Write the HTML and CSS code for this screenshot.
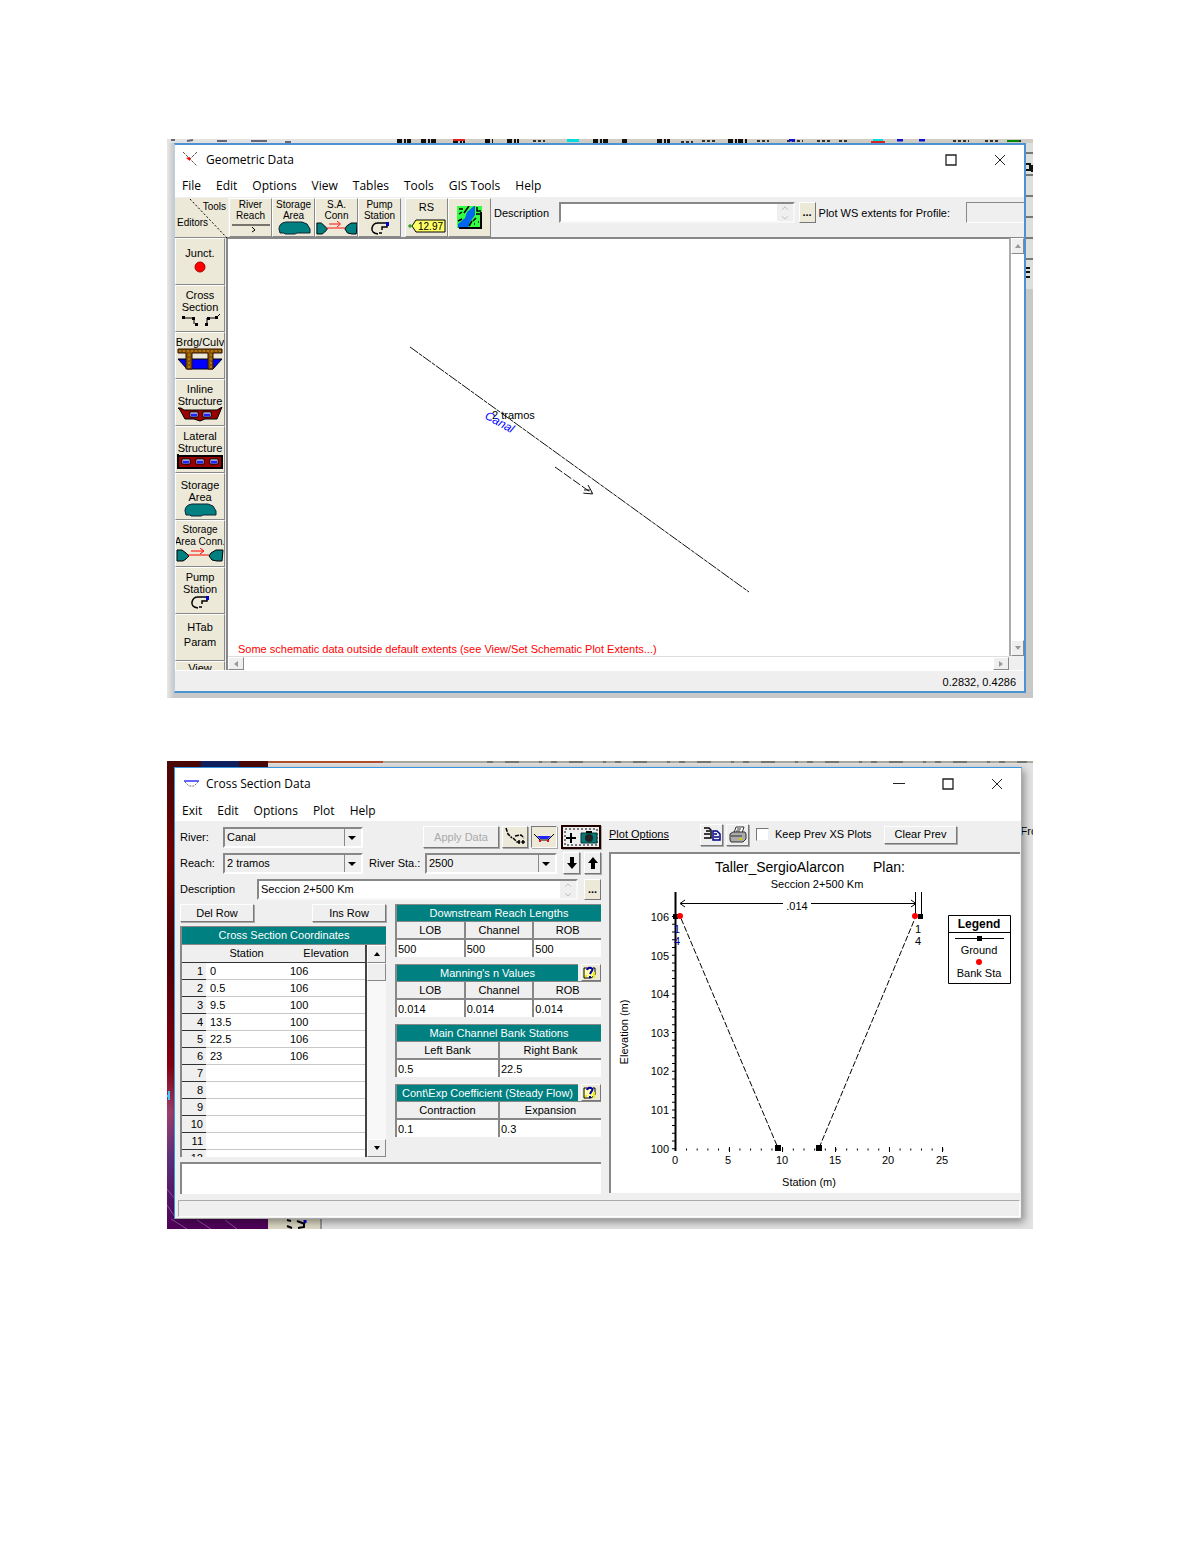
FILE: index.html
```html
<!DOCTYPE html>
<html lang="en">
<head>
  <meta charset="UTF-8">
  <meta name="viewport" content="width=device-width, initial-scale=1.0">
  <title>Geometric Data</title>
  <link rel="stylesheet" href="styles.css">
</head>
<body>
  <!-- Shared icons -->
  <svg class="sprite" aria-hidden="true">
    <symbol id="i-area" viewBox="0 0 34 14">
      <path d="M2 8Q2 2 9 1H25L30 3 33 8V12H20L18 13H8L7 12H3Z" fill="#008080" stroke="#123" />
    </symbol>
    <symbol id="i-conn" viewBox="0 0 48 14">
      <path d="M1 2H6L10 5 13 8 10 11 7 13H1ZM47 2H40L35 5 33 8 36 12 41 13H46Z" fill="#008080" stroke="#000" />
      <path d="M12 7H33M15 3H27M24 0L28 3 24 6" fill="none" stroke="#f00" />
    </symbol>
    <symbol id="i-pump" viewBox="0 0 22 14">
      <path d="M9 13Q2 12 3 7T9 2H18V6H13V9M8 2H15M10 12H13" fill="none" stroke="#000" stroke-width="1.5" />
      <path d="M17 1H20V5H17Z" fill="#00c" />
    </symbol>
    <symbol id="i-up" viewBox="0 0 8 8"><path d="M1 6L4 2 7 6Z" /></symbol>
    <symbol id="i-close" viewBox="0 0 12 12"><path d="M1 1L11 11M11 1L1 11" fill="none" stroke="#222" /></symbol>
    <symbol id="i-max" viewBox="0 0 12 12"><path d="M1 1H11V11H1Z" fill="none" stroke="#222" stroke-width="1.3" /></symbol>
    <symbol id="i-help" viewBox="0 0 16 14">
      <path d="M2 2H5M2 2V12H9L13 9V2H11" fill="#ffa" stroke="#000" />
      <path d="M5 4Q6 1 9 2T9 6L8 8M8 10V12" fill="none" stroke="#00a" stroke-width="2" />
      <path d="M12 6V12M4 9V11" stroke="#ee0" stroke-width="2" />
    </symbol>
  </svg>

  <!-- Geometric Data window -->
  <section class="shot shot-geo">
    <svg class="behind" aria-hidden="true">
      <rect width="100%" height="4" fill="#cfccc4" />
      <rect width="230" height="4" fill="#e2e2e2" />
      <path d="M4 1H8M20 2L26 1M50 2H60M84 2H100M118 3H124" stroke="#667" stroke-width="2" />
      <path d="M230 2H244M254 2H270M286 2H298M318 2H326M340 2H352M426 2H442M455 2H462M490 2H503M561 2H580" stroke="#111" stroke-width="4" stroke-dasharray="5 2 2 1" />
      <path d="M366 2H378M514 3H526M535 2H550M590 2H602M620 2H636M650 2H664M672 2H682M786 2H802M818 2H832M846 2H856" stroke="#333" stroke-width="2" stroke-dasharray="3 2" />
      <path d="M400 1H412M706 1H716" stroke="#0dd" stroke-width="4" />
      <path d="M286 1H298M704 3H718" stroke="#d22" stroke-width="2" />
      <path d="M730 1H736M752 1H758M622 1H628" stroke="#11c" stroke-width="3" />
      <path d="M840 2H852" stroke="#080" stroke-width="2" />
      <svg x="100%" overflow="visible">
        <rect x="-8" y="4" width="8" height="146" fill="#dedede" />
        <path d="M-8 14H0M-8 36H0M-8 57H0M-8 78H0M-8 99H0M-8 120H0" stroke="#777" stroke-width="2" />
        <path d="M-7 25H-3V32M-7 31H-3M-1 26V33M-8 129H-3M-8 133H-3M-8 138H-3" fill="none" stroke="#111" stroke-width="2" />
      </svg>
    </svg>

    <div class="window">
      <header class="titlebar">
        <svg class="app-icon" viewBox="0 0 18 18" aria-hidden="true">
          <path d="M1 1L15 15M15 1L7 9" fill="none" stroke="#555" stroke-dasharray="3 1" />
          <path d="M4 7L8 10 8 6Z" fill="#f00" />
        </svg>
        <h2>Geometric Data</h2>
        <div class="controls">
          <button type="button" aria-label="Maximize"><svg width="12" height="12"><use href="#i-max" /></svg></button>
          <button type="button" aria-label="Close"><svg width="12" height="12"><use href="#i-close" /></svg></button>
        </div>
      </header>
      <nav class="menu">
        <a href="#">File</a><a href="#">Edit</a><a href="#">Options</a><a href="#">View</a><a href="#">Tables</a><a href="#">Tools</a><a href="#">GIS Tools</a><a href="#">Help</a>
      </nav>

      <div class="toolbar">
        <div class="corner">
          <svg viewBox="0 0 53 41" aria-hidden="true"><path d="M15 1L53 41" stroke="#000" stroke-dasharray="2 2" /></svg>
          <span class="corner-tools">Tools</span>
          <span class="corner-editors">Editors</span>
        </div>
        <button type="button" class="tool">River<br>Reach
          <svg width="38" height="12" viewBox="0 0 38 12"><path d="M0 4H38M20 6L23 9 20 11" fill="none" stroke="#000" /></svg>
        </button>
        <button type="button" class="tool">Storage<br>Area<svg width="34" height="14"><use href="#i-area" /></svg></button>
        <button type="button" class="tool">S.A.<br>Conn<svg width="42" height="14" viewBox="0 0 48 14" preserveAspectRatio="none"><use href="#i-conn" /></svg></button>
        <button type="button" class="tool">Pump<br>Station<svg width="22" height="14"><use href="#i-pump" /></svg></button>
        <button type="button" class="tool tool-rs">RS
          <svg width="40" height="16" viewBox="0 0 40 16">
            <path d="M5 8L9 2H38V14H9Z" fill="#ff6" stroke="#000" />
            <path d="M1 8H6M3 6V10" stroke="#080" />
            <text x="11" y="12" class="rs-text">12.97</text>
          </svg>
        </button>
        <button type="button" class="tool" aria-label="Background map">
          <svg class="map" width="26" height="24" viewBox="0 0 26 24">
            <rect width="25" height="22" fill="#3f4" />
            <path d="M17 0L10 6 8 12 1 18V22H11L13 16 18 9V0Z" fill="#06e" />
            <path d="M12 0L7 7M2 3H6M2 8L5 6M19 8H24M16 15L19 12M17 18H18M21 16H22M12 20L15 15M1 15L5 13M20 1V5H24" fill="none" stroke="#000" stroke-width="1.5" />
            <path d="M24 6V22H2" fill="none" stroke="#000" stroke-width="2" />
          </svg>
        </button>
        <label for="geo-desc">Description</label>
        <div class="spinbox grow">
          <input type="text" id="geo-desc">
          <span class="spin"><svg viewBox="0 0 10 18"><path d="M2 6L5 3 8 6M2 13L5 16 8 13" fill="none" stroke="#bbb" /></svg></span>
        </div>
        <button type="button" class="dots">...</button>
        <label for="profile">Plot WS extents for Profile:</label>
        <input type="text" id="profile" class="profile">
      </div>

      <div class="editor">
        <aside class="editors">
          <button type="button">Junct.<svg width="12" height="14" viewBox="0 0 12 14"><circle cx="6" cy="8" r="5" fill="#f00" stroke="#a00" /></svg></button>
          <button type="button">Cross<br>Section<svg width="46" height="14" viewBox="0 0 46 14"><path d="M6 5H17V11M30 12V5H39L43 1" fill="none" stroke="#000" /><path d="M5 3h3v3h-3zM15 4h3v3h-3zM18 10h3v3h-3zM28 10h3v3h-3zM30 4h3v3h-3zM38 3h3v3h-3z" /></svg></button>
          <button type="button">Brdg/Culv<svg width="46" height="22" viewBox="0 0 46 22"><path d="M1 11H45L36 21H10Z" fill="#00f" stroke="#000" /><path d="M1 1H45V5H36V21H31V5H15V21H9V5H1Z" fill="#850" stroke="#310" /><path d="M2 3H44M12 6V20M34 6V20" stroke="#c93" stroke-dasharray="2 2" /></svg></button>
          <button type="button">Inline<br>Structure<svg width="46" height="16" viewBox="0 0 46 16"><path d="M1 1H4L7 3H40L45 0L40 12H28L23 14 17 12H8L3 3Z" fill="#900" stroke="#000" /><path d="M13 5H21V10H13ZM26 5H34V10H26Z" fill="#fff" stroke="#000" /><path d="M14 8H20M27 8H33" stroke="#22f" stroke-width="3" /></svg></button>
          <button type="button">Lateral<br>Structure<svg width="46" height="16" viewBox="0 0 46 16"><path d="M1 0V14H45V2H1" fill="#900" stroke="#000" stroke-width="2" /><path d="M5 5H13V10H5ZM19 5H27V10H19ZM33 5H41V10H33Z" fill="#fff" stroke="#000" /><path d="M6 8H12M20 8H26M34 8H40" stroke="#22f" stroke-width="3" /></svg></button>
          <button type="button" class="low">Storage<br>Area<svg width="34" height="14"><use href="#i-area" /></svg></button>
          <button type="button" class="tight">Storage<br>Area Conn.<svg width="48" height="14"><use href="#i-conn" /></svg></button>
          <button type="button">Pump<br>Station<svg width="22" height="14"><use href="#i-pump" /></svg></button>
          <button type="button" class="plain">HTab<br>Param</button>
          <button type="button">View</button>
        </aside>
        <div class="schematic">
          <svg viewBox="0 0 781 417" preserveAspectRatio="xMinYMin slice" role="img" aria-label="River schematic">
            <path d="M182 108L521 353" stroke="#111" stroke-dasharray="10 1 4 1" />
            <path d="M327 228L365 255M360 246L365 255 354 254M356 251H362" fill="none" stroke="#111" stroke-dasharray="9 2" />
            <text x="264" y="180" class="reach">2 tramos</text>
            <text x="256" y="179" class="river" transform="rotate(29 256 179)">Canal</text>
            <text x="10" y="414" class="warn">Some schematic data outside default extents (see View/Set Schematic Plot Extents...)</text>
          </svg>
        </div>
        <div class="vscroll">
          <button type="button" aria-label="Scroll up"><svg width="8" height="8"><use href="#i-up" /></svg></button>
          <button type="button" class="down" aria-label="Scroll down"><svg width="8" height="8"><use href="#i-up" /></svg></button>
        </div>
        <div class="hscroll">
          <button type="button" class="left" aria-label="Scroll left"><svg width="8" height="8"><use href="#i-up" /></svg></button>
          <button type="button" class="right" aria-label="Scroll right"><svg width="8" height="8"><use href="#i-up" /></svg></button>
        </div>
      </div>
      <footer class="coords">0.2832, 0.4286</footer>
    </div>
  </section>

  <!-- Cross Section Data window -->
  <section class="shot shot-xs">
    <svg class="behind" aria-hidden="true">
      <defs>
        <linearGradient id="wall" x1="0" y1="0" x2="0" y2="1">
          <stop offset="0" stop-color="#4a0808" /><stop offset=".2" stop-color="#780000" />
          <stop offset=".4" stop-color="#500006" /><stop offset=".65" stop-color="#850010" />
          <stop offset=".75" stop-color="#a04070" /><stop offset=".85" stop-color="#603080" /><stop offset="1" stop-color="#500058" />
        </linearGradient>
      </defs>
      <rect width="101" height="100%" fill="url(#wall)" />
      <rect x="34" width="38" height="6" fill="#102060" />
      <path d="M101 1H866" stroke="#aaa9a0" stroke-width="2" />
      <path d="M101 1H216" stroke="#b05030" stroke-width="2" />
      <path d="M320 1H860" stroke="#444" stroke-dasharray="6 12 14 20 3 9" />
      <path d="M0 335H3M2 330V339" stroke="#4cf" stroke-width="2" />
      <svg x="0" y="100%" overflow="visible">
        <path d="M0 -40L8 -30M0 -24L8 -12M4 -10L20 0M30 -9L44 0M58 -9L70 0" stroke="#8a50a8" />
        <rect x="101" y="-11" width="52" height="11" fill="#dedac6" />
        <path d="M154 -11V0" stroke="#999" stroke-width="2" />
        <path d="M120 -9L124 -8M120 -3L125 -1M130 -8L138 -5M137 -5V-2L131 -1" fill="none" stroke="#000" stroke-width="2" />
        <path d="M138 -9V-6" stroke="#00c" stroke-width="3" />
      </svg>
    </svg>
    <span class="peek">Fro</span>

    <div class="window">
      <header class="titlebar">
        <svg class="app-icon" viewBox="0 0 18 18" aria-hidden="true">
          <path d="M2 6H17" stroke="#66f" stroke-width="2" /><path d="M3 7L7 11H12L16 7" fill="none" stroke="#777" stroke-dasharray="2 1" />
        </svg>
        <h2>Cross Section Data</h2>
        <div class="controls">
          <button type="button" aria-label="Minimize"><svg width="12" height="12"><path d="M0 5.5H12" stroke="#222" /></svg></button>
          <button type="button" aria-label="Maximize"><svg width="12" height="12"><use href="#i-max" /></svg></button>
          <button type="button" aria-label="Close"><svg width="12" height="12"><use href="#i-close" /></svg></button>
        </div>
      </header>
      <nav class="menu">
        <a href="#">Exit</a><a href="#">Edit</a><a href="#">Options</a><a href="#">Plot</a><a href="#">Help</a>
      </nav>

      <div class="client">
        <div class="form">
          <div class="row">
            <label class="name" for="river">River:</label>
            <span class="select"><select id="river"><option>Canal</option></select></span>
            <span class="spacer"></span>
            <button type="button" class="btn apply" disabled>Apply Data</button>
            <button type="button" class="btn icon beige" aria-label="Edit points"><svg width="24" height="20" viewBox="0 0 24 20"><path d="M3 1L5 7 9 11M10 11L14 15H22M12 9L18 8 21 11M16 13V18M20 13V18" fill="none" stroke="#000" stroke-dasharray="4 1" stroke-width="1.5" /></svg></button>
            <button type="button" class="btn icon beige pressed" aria-label="Plot section"><svg width="24" height="20" viewBox="0 0 24 20"><path d="M5 9H19L16 12H8Z" fill="#22f" /><path d="M2 7L8 13H16L22 7" fill="none" stroke="#000" /><path d="M8 13V15M16 13V15" stroke="#f00" stroke-width="2" /></svg></button>
            <button type="button" class="btn camera" aria-label="Picture"><svg width="36" height="20" viewBox="0 0 36 20"><path d="M2 2H34V18H2Z" fill="none" stroke="#000" stroke-dasharray="2 2" /><path d="M3 11H13M8 6V16" stroke="#000" stroke-width="2" /><path d="M18 6H34V16H18Z" fill="#087878" stroke="#033" /><circle cx="26" cy="11" r="4" fill="#222" /><path d="M23 5H29" stroke="#000" stroke-width="2" /></svg></button>
          </div>
          <div class="row">
            <label class="name" for="reach">Reach:</label>
            <span class="select"><select id="reach"><option>2 tramos</option></select></span>
            <label class="sta" for="sta">River Sta.:</label>
            <span class="select select-sta"><select id="sta"><option>2500</option></select></span>
            <span class="spacer"></span>
            <button type="button" class="btn arrow" aria-label="Next station"><svg width="12" height="14" viewBox="0 0 12 14"><path d="M4 1H8V7H11L6 13 1 7H4Z" /></svg></button>
            <button type="button" class="btn arrow" aria-label="Previous station"><svg width="12" height="14" viewBox="0 0 12 14"><path d="M4 13H8V7H11L6 1 1 7H4Z" /></svg></button>
          </div>
          <div class="row">
            <label class="desc" for="xs-desc">Description</label>
            <div class="spinbox grow">
              <input type="text" id="xs-desc" value="Seccion 2+500 Km">
              <span class="spin"><svg viewBox="0 0 10 18"><path d="M2 6L5 3 8 6M2 13L5 16 8 13" fill="none" stroke="#bbb" /></svg></span>
            </div>
            <button type="button" class="dots">...</button>
          </div>

          <div class="panels">
            <div class="coords-panel">
              <div class="row-buttons">
                <button type="button" class="btn">Del Row</button>
                <button type="button" class="btn">Ins Row</button>
              </div>
              <div class="grid-box">
                <h3>Cross Section Coordinates</h3>
                <div class="grid-body">
                  <table>
                    <thead><tr><th></th><th>Station</th><th>Elevation</th></tr></thead>
                    <tbody>
                      <tr><th>1</th><td>0</td><td>106</td></tr>
                      <tr><th>2</th><td>0.5</td><td>106</td></tr>
                      <tr><th>3</th><td>9.5</td><td>100</td></tr>
                      <tr><th>4</th><td>13.5</td><td>100</td></tr>
                      <tr><th>5</th><td>22.5</td><td>106</td></tr>
                      <tr><th>6</th><td>23</td><td>106</td></tr>
                      <tr><th>7</th><td></td><td></td></tr>
                      <tr><th>8</th><td></td><td></td></tr>
                      <tr><th>9</th><td></td><td></td></tr>
                      <tr><th>10</th><td></td><td></td></tr>
                      <tr><th>11</th><td></td><td></td></tr>
                      <tr><th>12</th><td></td><td></td></tr>
                    </tbody>
                  </table>
                  <div class="grid-scroll">
                    <button type="button" aria-label="Scroll up"><svg width="8" height="8"><use href="#i-up" /></svg></button>
                    <span class="thumb"></span>
                    <button type="button" class="down" aria-label="Scroll down"><svg width="8" height="8"><use href="#i-up" /></svg></button>
                  </div>
                </div>
              </div>
            </div>

            <div class="groups">
              <fieldset class="group">
                <div class="group-head"><h3>Downstream Reach Lengths</h3></div>
                <div class="cells"><label>LOB<input type="text" value="500"></label><label>Channel<input type="text" value="500"></label><label>ROB<input type="text" value="500"></label></div>
              </fieldset>
              <fieldset class="group">
                <div class="group-head"><h3>Manning's n Values</h3><button type="button" class="help" aria-label="Help"><svg width="16" height="14"><use href="#i-help" /></svg></button></div>
                <div class="cells"><label>LOB<input type="text" value="0.014"></label><label>Channel<input type="text" value="0.014"></label><label>ROB<input type="text" value="0.014"></label></div>
              </fieldset>
              <fieldset class="group">
                <div class="group-head"><h3>Main Channel Bank Stations</h3></div>
                <div class="cells"><label>Left Bank<input type="text" value="0.5"></label><label>Right Bank<input type="text" value="22.5"></label></div>
              </fieldset>
              <fieldset class="group">
                <div class="group-head"><h3>Cont\Exp Coefficient (Steady Flow)</h3><button type="button" class="help" aria-label="Help"><svg width="16" height="14"><use href="#i-help" /></svg></button></div>
                <div class="cells"><label>Contraction<input type="text" value="0.1"></label><label>Expansion<input type="text" value="0.3"></label></div>
              </fieldset>
            </div>
          </div>
          <textarea class="notes" aria-label="Notes"></textarea>
        </div>

        <div class="plot-side">
          <div class="plot-bar">
            <a href="#">Plot Options</a>
            <button type="button" class="btn icon" aria-label="Copy"><svg width="20" height="18" viewBox="0 0 20 18"><path d="M2 2H7L9 4V12H2M4 5H8M2 8H8" fill="none" stroke="#000" stroke-width="1.5" /><path d="M11 5H15L18 8V14H11ZM12 8H15M12 11H17" fill="none" stroke="#008" stroke-width="1.5" /></svg></button>
            <button type="button" class="btn icon" aria-label="Print"><svg width="20" height="18" viewBox="0 0 20 18"><path d="M6 7L8 1H16L14 7" fill="#fff" stroke="#333" /><path d="M2 8L5 6H17L18 8V13L15 16H3L2 14Z" fill="#aaa" stroke="#333" /><path d="M3 10H14M9 3H13M8 5H12" stroke="#333" /><path d="M11 13H14" stroke="#cc0" stroke-width="2" /></svg></button>
            <label class="keep"><input type="checkbox">Keep Prev XS Plots</label>
            <button type="button" class="btn clear">Clear Prev</button>
          </div>
          <div class="plot">
            <svg viewBox="0 0 409 339" preserveAspectRatio="xMidYMin meet" role="img" aria-label="Cross section plot">
              <text x="104" y="18" class="big">Taller_SergioAlarcon</text>
              <text x="262" y="18" class="big">Plan:</text>
              <text x="206" y="34" text-anchor="middle">Seccion 2+500 Km</text>
              <path d="M70 49.5H172M200 49.5H304M74 46L69 49.5 74 53M300 46L305 49.5 300 53" fill="none" stroke="#000" />
              <text x="186" y="56" text-anchor="middle">.014</text>
              <path d="M64.5 38V297" stroke="#000" stroke-width="2" />
              <path d="M304.5 38V62M310.5 38V62" stroke="#000" />
              <path d="M63 62V296" stroke="#000" stroke-width="4" stroke-dasharray="1 6.74" />
              <path d="M75 295.5H334" stroke="#000" stroke-width="2" stroke-dasharray="1 9.68" />
              <path d="M118.5 293V298M171.5 293V298M224.5 293V298M278.5 293V298M331.5 293V298" stroke="#000" />
              <path d="M64 62H69L167 294M208 294L305 62" fill="none" stroke="#000" stroke-dasharray="6 2" />
              <path d="M62 60h5v5h-5zM307 60h5v5h-5zM164 291h6v6h-6zM205 291h6v6h-6z" />
              <g fill="#f00"><circle cx="69" cy="62" r="3" /><circle cx="304" cy="62" r="3" /></g>
              <g class="ticks-y">
                <text x="58" y="67">106</text><text x="58" y="106">105</text><text x="58" y="144">104</text><text x="58" y="183">103</text>
                <text x="58" y="221">102</text><text x="58" y="260">101</text><text x="58" y="299">100</text>
              </g>
              <g class="ticks-x">
                <text x="64" y="310">0</text><text x="117" y="310">5</text><text x="171" y="310">10</text><text x="224" y="310">15</text><text x="277" y="310">20</text><text x="331" y="310">25</text>
              </g>
              <g class="manning"><text x="66" y="79">1</text><text x="66" y="91">4</text></g>
              <g class="ticks-x"><text x="307" y="79">1</text><text x="307" y="91">4</text></g>
              <text x="198" y="332" text-anchor="middle">Station (m)</text>
              <text x="17" y="178" text-anchor="middle" transform="rotate(-90 17 178)">Elevation (m)</text>
              <path d="M337.5 61.5H399.5V129.5H337.5ZM337.5 78.5H399.5M344 84.5H393" fill="none" stroke="#000" />
              <path d="M366 82h5v5h-5z" />
              <circle cx="368" cy="108" r="3" fill="#f00" />
              <text x="368" y="74" text-anchor="middle" class="legend">Legend</text>
              <text x="368" y="100" text-anchor="middle">Ground</text>
              <text x="368" y="123" text-anchor="middle">Bank Sta</text>
            </svg>
          </div>
        </div>
      </div>
      <footer class="status"></footer>
    </div>
  </section>
</body>
</html>
```

FILE: styles.css
```css
* {
  box-sizing: border-box;
}
body {
  margin: 0;
  padding: 139px 167px;
  background: #fff;
  color: #000;
  font: 11px/13px "Liberation Sans", Arial, sans-serif;
}
button, input, select, textarea {
  font: inherit;
  color: inherit;
  margin: 0;
  border-radius: 0;
}
button {
  padding: 0;
}
h2, h3 {
  margin: 0;
  font-weight: normal;
}
svg {
  display: block;
}
.sprite {
  position: absolute;
  width: 0;
  height: 0;
}

/* Windows and what shows behind them */
.shot {
  position: relative;
  overflow: hidden;
}
.shot-geo {
  padding: 4px 7px 5px;
  background: linear-gradient(to right, #e8e8e8, #c8c8c8 7px);
}
.shot-xs {
  margin-top: 63px;
  padding: 6px 11px 10px 7px;
  background: #e2e2e2;
}
.behind {
  position: absolute;
  left: 0;
  top: 0;
  width: 100%;
  height: 100%;
}
.peek {
  position: absolute;
  right: -4px;
  top: 64px;
}
.window {
  position: relative;
  background: #efefef;
  border: 2px solid #4a93d0;
  border-left: 1px solid #b8d0e4;
}
.shot-xs .window {
  border: 1px solid #3a96e0;
  border-right-color: #aaa;
  border-bottom-color: #aaa;
  box-shadow: 2px 3px 8px rgba(0, 0, 0, 0.4);
}
.titlebar {
  display: flex;
  align-items: center;
  height: 30px;
  padding-left: 7px;
  background: #fff;
  font: 12px/16px "Open Sans", "Noto Sans", sans-serif;
}
.shot-xs .titlebar {
  height: 32px;
}
.titlebar h2 {
  flex: 1;
  font-size: 12px;
}
.app-icon {
  width: 18px;
  height: 18px;
  margin-right: 6px;
}
.controls {
  display: flex;
}
.controls button {
  display: flex;
  justify-content: center;
  width: 49px;
  border: 0;
  background: none;
}
.menu {
  display: flex;
  gap: 15px;
  height: 22px;
  padding-left: 7px;
  background: #fff;
  font: 12px/22px "Open Sans", "Noto Sans", sans-serif;
}
.shot-xs .menu {
  height: 21px;
}
.menu a {
  color: #000;
  text-decoration: none;
}

/* Geometric Data toolbar */
.toolbar {
  display: flex;
  height: 41px;
  padding-top: 1px;
  border-bottom: 1px solid #888;
}
.toolbar label {
  padding: 9px 4px 0 3px;
  white-space: nowrap;
}
.corner {
  position: relative;
  width: 53px;
  margin-right: 1px;
  background: #ece9d8;
}
.corner span {
  position: absolute;
  font-size: 10px;
}
.corner-tools {
  right: 2px;
  top: 2px;
}
.corner-editors {
  left: 2px;
  top: 18px;
}
.tool, .editors button {
  display: flex;
  flex-direction: column;
  align-items: center;
  background: #ece9d8;
  border: 1px solid;
  border-color: #fff #888 #888 #fff;
  overflow: hidden;
  white-space: nowrap;
}
.tool {
  width: 43px;
  font-size: 10px;
  line-height: 11px;
}
.tool svg {
  flex: none;
}
.tool-rs {
  margin-left: 4px;
  padding-top: 3px;
  gap: 5px;
  font-size: 11px;
}
.tool .map {
  margin: auto;
}
.rs-text {
  font-size: 10px;
}
.spinbox {
  display: flex;
  height: 21px;
  background: #fff;
  border: 2px solid;
  border-color: #888 #f8f8f8 #f8f8f8 #888;
}
.toolbar .spinbox {
  margin: 4px 4px 0 6px;
}
.grow {
  flex: 1;
}
.spinbox input {
  flex: 1;
  min-width: 0;
  padding: 0;
  border: 0;
  background: none;
}
.spin {
  width: 16px;
  padding-left: 3px;
  background: #efefef;
}
.spin svg {
  width: 10px;
  height: 17px;
}
.dots {
  width: 17px;
  height: 21px;
  background: #ece9d8;
  border: 1px solid;
  border-color: #fff #777 #777 #fff;
  font-weight: bold;
}
.toolbar .dots {
  margin-top: 4px;
}
.profile {
  width: 58px;
  height: 21px;
  margin: 4px 0 0 12px;
  background: #efefef;
  border: 1px solid #888;
  border-right: 0;
  border-bottom-color: #fff;
}

/* Schematic editor */
.editor {
  display: grid;
  grid-template-columns: 53px 1fr 15px;
  grid-template-rows: 418px 14px;
}
.editors {
  grid-row: 1 / 3;
  padding-right: 1px;
  border-right: 2px solid #888;
  overflow: hidden;
}
.editors button {
  width: 100%;
  height: 47px;
  padding-top: 3px;
  line-height: 12px;
}
.editors button:first-child {
  padding-top: 8px;
}
.editors button:last-child {
  padding-top: 0;
}
.editors svg {
  flex: none;
}
.editors .plain, .editors .low {
  padding-top: 5px;
}
.editors .plain {
  line-height: 15px;
}
.editors .tight {
  font-size: 10px;
}
.schematic {
  background: #fff;
  border-top: 1px solid #888;
}
.schematic svg {
  width: 100%;
  height: 417px;
}
.reach {
  font-size: 11px;
}
.river {
  font-size: 12px;
  font-style: italic;
  fill: #00f;
}
.warn {
  font-size: 11px;
  fill: #f00;
}
.vscroll, .hscroll {
  display: flex;
  justify-content: space-between;
  background: #fff;
}
.vscroll {
  flex-direction: column;
  border-left: 2px solid #aaa;
}
.hscroll {
  border-top: 1px solid #ddd;
}
.vscroll button, .hscroll button {
  display: grid;
  place-items: center;
  width: 16px;
  height: 16px;
  background: #efefef;
  border: 1px solid;
  border-color: #fff #888 #888 #fff;
}
.vscroll button {
  width: 13px;
}
.hscroll button {
  height: 13px;
}
.vscroll svg, .hscroll svg {
  fill: #999;
}
.down svg {
  transform: rotate(180deg);
}
.left svg {
  transform: rotate(-90deg);
}
.right svg {
  transform: rotate(90deg);
}
.coords {
  height: 21px;
  padding: 5px 8px 0;
  border-top: 1px solid #fff;
  text-align: right;
}

/* Cross Section Data */
.client {
  display: flex;
  gap: 8px;
  padding: 5px 1px 0 5px;
}
.form {
  display: flex;
  flex-direction: column;
  gap: 4px;
  width: 421px;
}
.row {
  display: flex;
  align-items: center;
  height: 22px;
}
.name {
  width: 43px;
}
.sta {
  width: 62px;
  padding-left: 6px;
}
.desc {
  width: 77px;
}
.spacer {
  flex: 1;
}
.select {
  position: relative;
  width: 140px;
  height: 21px;
  border: 2px solid;
  border-color: #888 #fff #fff #888;
}
.select-sta {
  width: 132px;
}
.select::after {
  content: "";
  position: absolute;
  right: 5px;
  top: 7px;
  border: 4px solid transparent;
  border-top-color: #000;
  border-bottom: 0;
}
.select select {
  display: block;
  appearance: none;
  width: 100%;
  height: 17px;
  padding: 0 2px;
  border: 0;
  background: linear-gradient(#efefef, #efefef) right / 16px no-repeat, linear-gradient(#888, #888) right / 17px no-repeat, #efefef;
}
.btn {
  display: flex;
  align-items: center;
  justify-content: center;
  height: 18px;
  background: #efefef;
  border: 1px solid;
  border-color: #fff #777 #777 #fff;
  box-shadow: 1px 1px #aaa;
}
.apply {
  width: 76px;
  height: 22px;
}
.apply:disabled {
  color: #aaa;
}
.icon {
  width: 23px;
  height: 22px;
  margin-left: 3px;
}
.beige {
  width: 26px;
  background: #ece9d8;
}
.pressed {
  border-color: #777 #fff #fff #777;
}
.camera {
  width: 40px;
  height: 24px;
  margin-left: 4px;
  border: 2px solid #200;
}
.arrow {
  width: 17px;
  height: 22px;
  margin-left: 4px;
}
.row .dots {
  margin-left: 6px;
}
.row .spinbox input {
  padding-left: 2px;
}
.panels {
  display: flex;
  gap: 9px;
  height: 254px;
}
.coords-panel {
  width: 206px;
}
.row-buttons {
  display: flex;
  justify-content: space-between;
  margin-bottom: 4px;
}
.row-buttons .btn {
  width: 74px;
}
h3 {
  background: #008080;
  color: #fff;
  font-size: 11px;
  text-align: center;
}
.grid-box {
  border-left: 2px solid #888;
  border-top: 1px solid #888;
}
.grid-box h3 {
  height: 17px;
  line-height: 17px;
}
.grid-body {
  display: flex;
  height: 213px;
  border-top: 1px solid #888;
  overflow: hidden;
}
table {
  flex: 1;
  table-layout: fixed;
  width: 183px;
  border-collapse: collapse;
  background: #fff;
}
th, td {
  height: 17px;
  padding: 0 3px 0 4px;
  border-bottom: 1px solid #c8c8c8;
  font-weight: normal;
  line-height: 16px;
  text-align: left;
}
th {
  background: #efefef;
  border-color: #333;
}
thead th {
  text-align: center;
}
th:first-child {
  width: 24px;
  text-align: right;
}
th:nth-child(2) {
  width: 80px;
}
.grid-scroll {
  display: flex;
  flex-direction: column;
  width: 21px;
  background: #f8f8f8;
  border-left: 2px solid #444;
}
.grid-scroll button, .thumb {
  display: grid;
  place-items: center;
  height: 18px;
  background: #efefef;
  border: 1px solid;
  border-color: #fff #888 #888 #fff;
}
.grid-scroll .down {
  margin-top: auto;
}
.groups {
  flex: 1;
  display: flex;
  flex-direction: column;
  gap: 7px;
}
.group {
  min-width: 0;
  margin: 0;
  padding: 0;
  border: 0;
}
.group-head {
  display: flex;
  gap: 3px;
  height: 17px;
}
.group-head h3 {
  flex: 1;
  border-left: 2px solid #888;
  border-top: 1px solid #888;
  line-height: 16px;
  white-space: nowrap;
}
.help {
  width: 20px;
  background: #ece9d8;
  border: 1px solid;
  border-color: #fff #777 #777 #fff;
}
.cells {
  display: flex;
}
.cells label {
  flex: 1;
  min-width: 0;
  border-left: 2px solid #888;
  border-top: 1px solid #888;
  line-height: 16px;
  text-align: center;
}
.cells input {
  display: block;
  width: 100%;
  height: 19px;
  padding: 0 1px;
  background: #fff;
  border: 0;
  border-top: 2px solid #888;
}
.notes {
  height: 32px;
  border: 0;
  border-left: 2px solid #888;
  border-top: 2px solid #888;
  background: #fff;
  resize: none;
}
.plot-side {
  flex: 1;
}
.plot-bar {
  display: flex;
  align-items: center;
  height: 27px;
  margin-top: -5px;
}
.plot-bar a {
  width: 88px;
  color: #000;
}
.keep {
  display: flex;
  align-items: center;
  gap: 6px;
  width: 128px;
  margin-left: 7px;
}
.keep input {
  appearance: none;
  width: 13px;
  height: 13px;
  background: #fff;
  border: 1px solid;
  border-color: #777 #eee #eee #777;
}
.clear {
  width: 73px;
}
.plot {
  margin-top: 4px;
  background: #fff;
  border-left: 2px solid #888;
  border-top: 2px solid #888;
}
.plot svg {
  width: 100%;
  height: 339px;
}
.plot text {
  font-size: 11px;
}
.plot .big {
  font-size: 14px;
}
.ticks-y text {
  text-anchor: end;
}
.ticks-x text, .manning text {
  text-anchor: middle;
}
.manning {
  fill: #008;
}
.plot .legend {
  font-size: 12px;
  font-weight: bold;
}
.status {
  height: 17px;
  margin: 6px 1px 1px 3px;
  border: 1px solid;
  border-color: #aaa #fff #fff #aaa;
}
```
